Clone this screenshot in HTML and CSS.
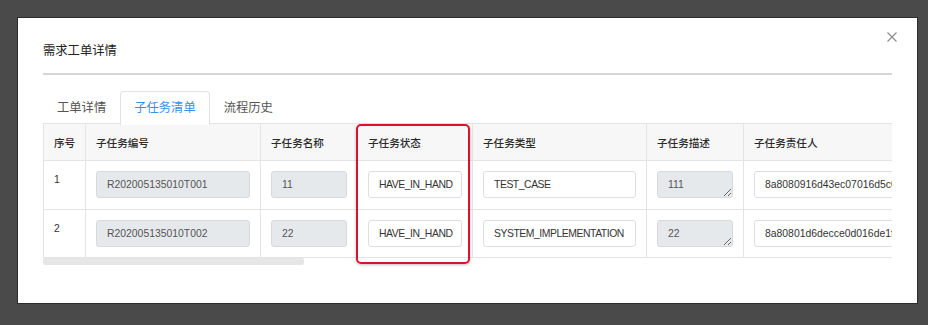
FILE: index.html
```html
<!DOCTYPE html>
<html lang="zh-CN">
<head>
<meta charset="utf-8">
<title>需求工单详情</title>
<link rel="stylesheet" href="styles.css">
</head>
<body>
<div class="modal">
  <div class="modal-header">
    <div class="modal-title">需求工单详情</div>
    <button class="close" aria-label="close">
      <svg width="10" height="10" viewBox="0 0 10 10"><path d="M0.5 0.5 L9.5 9.5 M9.5 0.5 L0.5 9.5" stroke="#8a8a8a" stroke-width="1.1" fill="none"/></svg>
    </button>
  </div>
  <div class="tabs">
    <div class="tab">工单详情</div>
    <div class="tab active">子任务清单</div>
    <div class="tab">流程历史</div>
  </div>
  <div class="table-wrap">
    <table class="grid">
      <colgroup>
        <col class="c1"><col class="c2"><col class="c3"><col class="c4"><col class="c5"><col class="c6"><col class="c7">
      </colgroup>
      <thead>
        <tr><th>序号</th><th>子任务编号</th><th>子任务名称</th><th>子任务状态</th><th>子任务类型</th><th>子任务描述</th><th>子任务责任人</th></tr>
      </thead>
      <tbody>
        <tr class="r1">
          <td>1</td>
          <td><input class="field dis" value="R202005135010T001" disabled></td>
          <td><input class="field dis" value="11" disabled></td>
          <td><input class="field caps" value="HAVE_IN_HAND" readonly></td>
          <td><input class="field caps" value="TEST_CASE" readonly></td>
          <td><textarea class="field dis area" rows="1" disabled>111</textarea></td>
          <td><input class="field wide" value="8a8080916d43ec07016d5c0a1b2" readonly></td>
        </tr>
        <tr class="r2">
          <td>2</td>
          <td><input class="field dis" value="R202005135010T002" disabled></td>
          <td><input class="field dis" value="22" disabled></td>
          <td><input class="field caps" value="HAVE_IN_HAND" readonly></td>
          <td><input class="field caps" value="SYSTEM_IMPLEMENTATION" readonly></td>
          <td><textarea class="field dis area" rows="1" disabled>22</textarea></td>
          <td><input class="field wide" value="8a80801d6decce0d016de1f2a3b" readonly></td>
        </tr>
      </tbody>
    </table>
    <div class="hscroll"></div>
  </div>
</div>
<div class="highlight"></div>
</body>
</html>
```

FILE: styles.css
```css
html, body {
  margin: 0;
  padding: 0;
}
body {
  width: 928px;
  height: 325px;
  background: #4a4a4a;
  font-family: "Liberation Sans", "Noto Sans CJK SC", sans-serif;
  color: #333;
  overflow: hidden;
  position: relative;
}
.modal {
  margin: 17px 0 0 17px;
  width: 849px;
  height: 285px;
  padding: 0 25px;
  background: #fff;
  border: 1px solid #2c2c2c;
  position: relative;
}
.modal-header {
  height: 57px;
  box-sizing: border-box;
  padding-top: 23px;
  border-bottom: 2px solid #d6d6d6;
}
.modal-title {
  font-size: 12.3px;
  line-height: 18px;
  color: #222;
  font-family: "Noto Sans CJK SC", sans-serif;
}
.close {
  position: absolute;
  right: 20px;
  top: 14px;
  width: 10px;
  height: 10px;
  padding: 0;
  border: 0;
  background: none;
  display: block;
}
.close svg { display: block; }
.tabs {
  display: flex;
  margin-top: 16px;
  height: 32px;
  position: relative;
  z-index: 1;
}
.tab {
  padding: 0 13px;
  border: 1px solid transparent;
  border-bottom: 0;
  font-size: 12.3px;
  line-height: 31px;
  color: #555;
  font-family: "Noto Sans CJK SC", sans-serif;
  border-radius: 4px 4px 0 0;
}
.tab.active {
  color: #3a8ee6;
  border-color: #e2e2e2;
  background: #fff;
  height: 33px;
}
.table-wrap {
  width: 849px;
  overflow: hidden;
}
.grid {
  border-collapse: collapse;
  table-layout: fixed;
  width: 900px;
  font-size: 10.4px;
}
.c1 { width: 42px; }
.c2 { width: 175px; }
.c3 { width: 97px; }
.c4 { width: 115px; }
.c5 { width: 174px; }
.c6 { width: 97px; }
.c7 { width: 200px; }
.grid th, .grid td {
  border: 1px solid #e4e4e4;
  padding: 0 10px;
  text-align: left;
}
.grid th {
  height: 36px;
  background: #f7f7f8;
  font-weight: 500;
  font-size: 10.6px;
  color: #2a2a2a;
  font-family: "Noto Sans CJK SC", sans-serif;
  white-space: nowrap;
}
.grid td {
  vertical-align: top;
  padding-top: 10px;
  line-height: 17px;
  color: #333;
}
.r1 td { height: 38px; }
.r2 td { height: 37px; }
.field {
  display: block;
  width: 100%;
  height: 27px;
  box-sizing: border-box;
  margin: 0;
  padding: 0 10px;
  border: 1px solid #dcdfe3;
  border-radius: 3px;
  background: #fff;
  font-family: "Liberation Sans", sans-serif;
  font-size: 10.4px;
  color: #333;
  outline: none;
}
.field.caps {
  letter-spacing: -0.45px;
  padding: 0 8px 0 10px;
}
.field.dis {
  background: #e6e9ec;
  border-color: #d7dadd;
  color: #555;
  -webkit-text-fill-color: #555;
  opacity: 1;
}
.field.wide {
  width: 180px;
}
.area {
  padding: 6px 10px 0;
  line-height: 14px;
  resize: vertical;
  overflow: hidden;
  min-height: 27px;
  max-height: 27px;
}
.hscroll {
  width: 261px;
  height: 7px;
  background: #e6e6e6;
  border-radius: 2px;
}
.highlight {
  position: absolute;
  left: 356px;
  top: 124px;
  width: 114px;
  height: 140px;
  box-sizing: border-box;
  border: 2.5px solid #d8132e;
  border-radius: 5px;
  box-shadow: 0 1px 3px rgba(0, 0, 0, 0.25);
}
```
